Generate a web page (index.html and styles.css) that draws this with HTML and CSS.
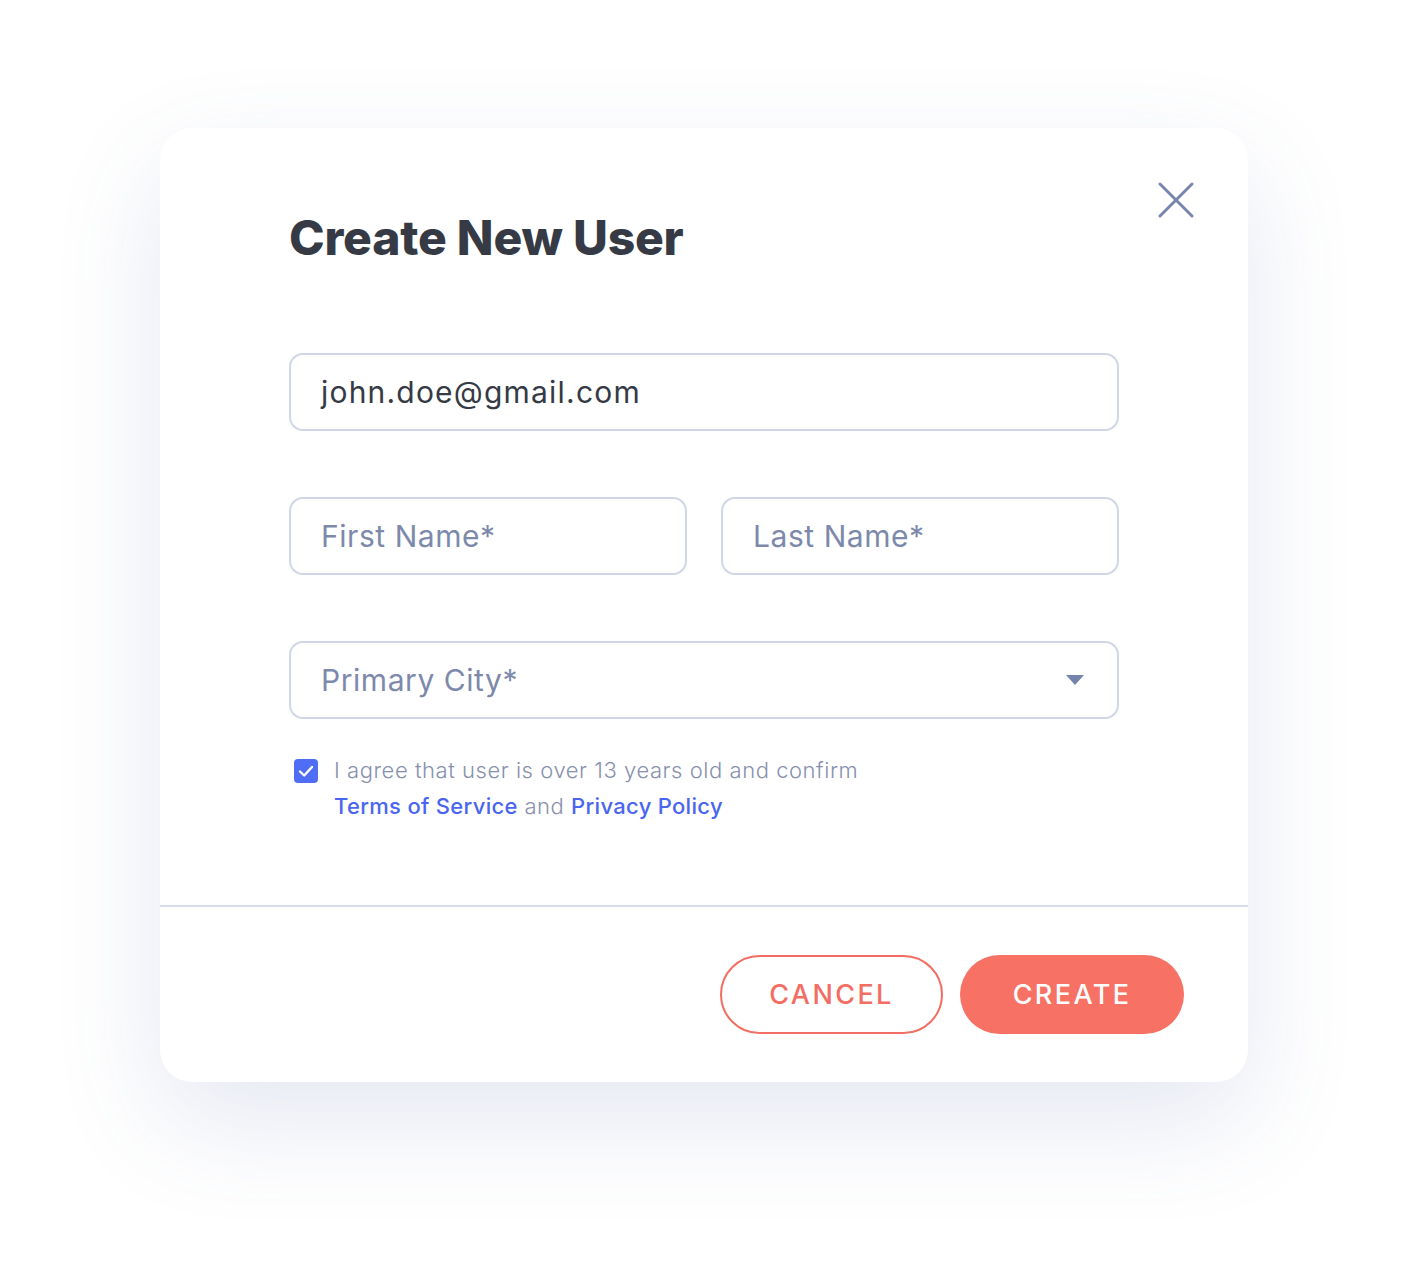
FILE: index.html
```html
<!DOCTYPE html>
<html lang="en">
<head>
<meta charset="utf-8">
<title>Create New User</title>
<link rel="stylesheet" href="styles.css">
</head>
<body>
<div class="stage">
  <div class="modal">
    <button class="close" aria-label="Close">
      <svg width="36" height="36" viewBox="0 0 36 36"><path d="M2 2 L34 34 M34 2 L2 34" stroke="#7a87ad" stroke-width="3" stroke-linecap="round" fill="none"/></svg>
    </button>
    <div class="body">
      <h1 class="title">Create New User</h1>
      <div class="field"><span class="value">john.doe@gmail.com</span></div>
      <div class="row">
        <div class="field"><span class="placeholder">First Name*</span></div>
        <div class="field"><span class="placeholder">Last Name*</span></div>
      </div>
      <div class="field select">
        <span class="placeholder">Primary City*</span>
        <span class="caret"></span>
      </div>
      <div class="agree">
        <span class="check">
          <svg width="24" height="24" viewBox="0 0 24 24"><path d="M6 12.5 L10.2 16.5 L18 8" stroke="#fff" stroke-width="2.4" stroke-linecap="round" stroke-linejoin="round" fill="none"/></svg>
        </span>
        <p class="agree-text">I agree that user is over 13 years old and confirm<br><a href="#" class="link">Terms of Service</a> and <a href="#" class="link">Privacy Policy</a></p>
      </div>
    </div>
    <div class="footer">
      <button class="btn btn-outline">CANCEL</button>
      <button class="btn btn-fill">CREATE</button>
    </div>
  </div>
</div>
</body>
</html>
```

FILE: styles.css
```css
* { box-sizing: border-box; }
html, body { margin: 0; padding: 0; background: #ffffff; }
body { font-family: "Inter", "Open Sans", sans-serif; }

.stage {
  width: 1408px;
  height: 1274px;
  padding: 128px 160px 0 160px;
}

.modal {
  position: relative;
  width: 1088px;
  height: 954px;
  background: #ffffff;
  border-radius: 32px;
  box-shadow: 0 40px 110px rgba(70, 90, 165, 0.14);
  display: flex;
  flex-direction: column;
}

.close {
  position: absolute;
  top: 54px;
  right: 54px;
  width: 36px;
  height: 36px;
  padding: 0;
  border: 0;
  background: transparent;
  cursor: pointer;
}
.close svg { display: block; }

.body {
  padding: 82px 129px 0 129px;
  height: 777px;
  display: flex;
  flex-direction: column;
}

.title {
  margin: 0 0 87px 0;
  font-size: 48px;
  line-height: 56px;
  font-weight: 800;
  color: #353a45;
  letter-spacing: -0.2px;
}

.field {
  flex: none;
  height: 78px;
  border: 2px solid #cfd6e6;
  border-radius: 14px;
  display: flex;
  align-items: center;
  padding: 0 30px;
  font-size: 30px;
  margin-bottom: 66px;
}
.value { color: #353a45; letter-spacing: 1.2px; }
.placeholder { color: #7d89ab; letter-spacing: 0.55px; }

.row {
  display: grid;
  grid-template-columns: 1fr 1fr;
  gap: 34px;
}

.select { justify-content: space-between; margin-bottom: 38px; }
.caret {
  width: 0; height: 0;
  border-left: 9px solid transparent;
  border-right: 9px solid transparent;
  border-top: 10px solid #7483ab;
  margin-right: 3px;
}

.agree {
  display: flex;
  gap: 16px;
  padding-left: 5px;
}
.check {
  flex: none;
  width: 24px;
  height: 24px;
  border-radius: 4px;
  background: #4f6ef5;
  margin-top: 2px;
}
.check svg { display: block; }
.agree-text {
  margin: -5px 0 0 0;
  font-size: 22px;
  line-height: 36px;
  letter-spacing: 0.55px;
  color: #8790ad;
  font-weight: 300;
}
.link {
  color: #4a66f0;
  font-weight: 500;
  letter-spacing: 0.3px;
  text-decoration: none;
}

.footer {
  border-top: 2px solid #d6dcea;
  flex: 1;
  display: flex;
  justify-content: flex-end;
  align-items: center;
  gap: 17px;
  padding: 0 64px 0 0;
}

.btn {
  height: 79px;
  width: 223px;
  border-radius: 40px;
  font-family: "Inter", "Open Sans", sans-serif;
  font-size: 27px;
  font-weight: 500;
  letter-spacing: 2.4px;
  cursor: pointer;
}
.btn-outline {
  background: #ffffff;
  border: 2.5px solid #f26e62;
  color: #f26e62;
}
.btn-fill {
  width: 224px;
  background: #f77165;
  border: 0;
  color: #ffffff;
}
```
